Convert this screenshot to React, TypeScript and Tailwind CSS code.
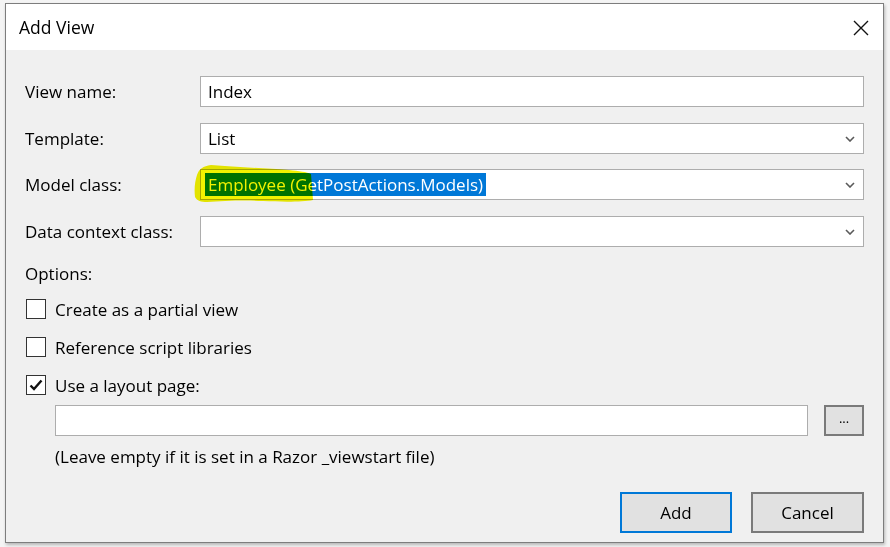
import React from "react";

const font = { fontFamily: '"Open Sans", "Noto Sans", sans-serif' };

function Chevron() {
  return (
    <svg width="10" height="6" viewBox="0 0 10 6" className="shrink-0">
      <path d="M1 1 L5 5 L9 1" fill="none" stroke="#5a5a5a" strokeWidth="1.6" />
    </svg>
  );
}

function Checkbox({ checked }: { checked?: boolean }) {
  return (
    <div className="w-[20px] h-[20px] border border-[#333333] bg-white flex items-center justify-center shrink-0">
      {checked && (
        <svg width="14" height="12" viewBox="0 0 14 12">
          <path d="M1.5 6.5 L5 10 L12.5 1.5" fill="none" stroke="#111" strokeWidth="2.4" />
        </svg>
      )}
    </div>
  );
}

export default function App() {
  return (
    <div
      className="w-[890px] h-[547px] bg-[#f4f4f4] overflow-hidden pt-[3px] pl-[5px] text-black"
      style={font}
    >
      <div className="w-[879px] h-[540px] border border-[#7d7d7d] bg-[#f0f0f0] shadow-[1px_2px_3px_rgba(0,0,0,0.25)] flex flex-col">
        <div className="h-[46px] bg-white flex items-center justify-between pl-[13px] pr-[14px] pt-[2px] shrink-0">
          <span className="text-[17.5px] leading-none">Add View</span>
          <svg width="16" height="16" viewBox="0 0 16 16">
            <path d="M1 1 L15 15 M15 1 L1 15" stroke="#111" strokeWidth="1.4" />
          </svg>
        </div>
        <div className="flex flex-col px-[19px] pt-[26px] text-[17px] leading-none">
          <div className="flex items-center h-[31px]">
            <span className="w-[175px]">View name:</span>
            <div className="flex-1 h-full bg-white border border-[#adadad] flex items-center pl-[7px]">Index</div>
          </div>
          <div className="flex items-center h-[31px] mt-[16px]">
            <span className="w-[175px]">Template:</span>
            <div className="flex-1 h-full bg-white border border-[#adadad] flex items-center justify-between pl-[7px] pr-[8px]">
              <span>List</span>
              <Chevron />
            </div>
          </div>
          <div className="flex items-center h-[31px] mt-[15px]">
            <span className="w-[175px]">Model class:</span>
            <div className="flex-1 h-full bg-white border border-[#adadad] flex items-center justify-between pl-[4px] pr-[8px] relative">
              <span className="bg-[#0078d7] text-white h-[23px] flex items-center px-[3px]">
                Employee (GetPostActions.Models)
              </span>
              <Chevron />
              <svg
                className="absolute left-[-8px] top-[-7px] mix-blend-multiply pointer-events-none"
                width="124"
                height="44"
                viewBox="0 0 124 44"
              >
                <path
                  d="M4 12 C6 6 10 3 18 2 C40 4 70 5 96 7 C106 8 114 9 118 11 L120 37 C110 39 90 39 70 38 C50 37 30 38 14 39 C8 39 4 38 2 34 C1 26 2 18 4 12 Z"
                  fill="#f2f200"
                />
              </svg>
            </div>
          </div>
          <div className="flex items-center h-[31px] mt-[16px]">
            <span className="w-[175px]">Data context class:</span>
            <div className="flex-1 h-full bg-white border border-[#adadad] flex items-center justify-end pr-[8px]">
              <Chevron />
            </div>
          </div>
          <div className="h-[20px] mt-[16px] flex items-center">Options:</div>
          <div className="flex items-center h-[20px] mt-[16px] gap-[9px] pl-[1px]">
            <Checkbox />
            <span>Create as a partial view</span>
          </div>
          <div className="flex items-center h-[20px] mt-[18px] gap-[9px] pl-[1px]">
            <Checkbox />
            <span>Reference script libraries</span>
          </div>
          <div className="flex items-center h-[20px] mt-[18px] gap-[9px] pl-[1px]">
            <Checkbox checked />
            <span>Use a layout page:</span>
          </div>
          <div className="flex items-center h-[31px] mt-[10px] pl-[30px]">
            <div className="flex-1 h-full bg-white border border-[#adadad]"></div>
            <div className="w-[40px] h-full ml-[16px] bg-[#e1e1e1] border-2 border-[#7a7a7a] flex items-center justify-center text-[13px] pb-[4px]">
              ...
            </div>
          </div>
          <div className="h-[20px] mt-[10px] pl-[30px] flex items-center">
            (Leave empty if it is set in a Razor _viewstart file)
          </div>
          <div className="flex justify-end gap-[19px] mt-[26px]">
            <div className="w-[112px] h-[41px] bg-[#e1e1e1] border-2 border-[#0078d7] flex items-center justify-center text-[17px]">
              Add
            </div>
            <div className="w-[113px] h-[41px] bg-[#e1e1e1] border-2 border-[#7a7a7a] flex items-center justify-center text-[17px]">
              Cancel
            </div>
          </div>
        </div>
      </div>
    </div>
  );
}
